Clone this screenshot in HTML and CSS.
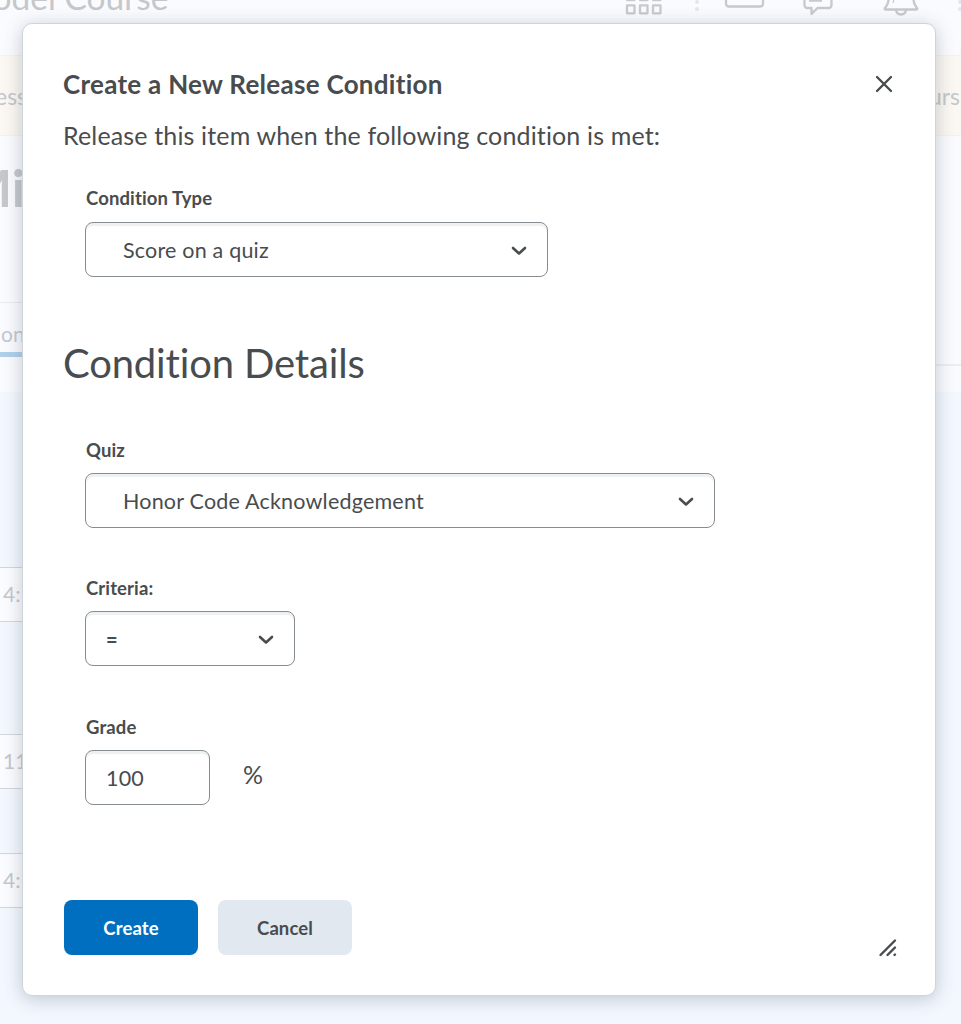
FILE: index.html
```html
<!DOCTYPE html>
<html lang="en">
  <head>
    <meta charset="UTF-8" />
    <meta name="viewport" content="width=device-width, initial-scale=1.0" />
    <title>Create a New Release Condition</title>
    <link rel="stylesheet" href="styles.css">
  </head>

  <body>
    <div class="page">
      <div class="navbar">
        <div class="course-name">Model Course</div>
        <svg class="nav-icons" width="361" height="24" viewBox="0 0 361 24" fill="none" stroke="#c8c9cd" stroke-width="2.300">
          <path d="M27 -8h7.500v8h-7.500zM40 -8h7.500v8h-7.500zM53 -8h7.500v8h-7.500zM27 5.300h7.500v8h-7.500zM40 5.300h7.500v8h-7.500zM53 5.300h7.500v8h-7.500z" stroke-linejoin="round" />
          <path d="M126 -4v7.500q0 3 3 3h31q3 0 3 -3v-7.500" />
          <path d="M204.500 -4v9q0 3 3 3h4v6l6 -6h11q3 0 3 -3v-9M209 .5h13" stroke-linejoin="round" />
          <path d="M289 -6q0 10 -4 14q-1 1.500 1 1.500h30q2 0 1 -1.500q-4 -4 -4 -14M296 10c1 6 9 6 10 0" />
          <path d="M294 -1l-1 4" stroke-width="1.200" />
          <g fill="#e4e6ee" stroke="none">
            <circle cx="97" cy="2" r="2" /><circle cx="97" cy="9" r="2" />
            <circle cx="360" cy="2" r="2" /><circle cx="360" cy="9" r="2" />
          </g>
        </svg>
      </div>
      <div class="alert">
        <span class="alert-start">ess</span>
        <span>urs</span>
      </div>
      <div class="page-title"><span>Mi</span></div>
      <div class="tabs"><div class="tab">on</div></div>
      <div class="tab-end"></div>
      <div class="content">
        <div class="row">4:</div>
        <div class="row row-second">11</div>
        <div class="row row-third">4:</div>
      </div>
    </div>

    <div class="dialog" role="dialog">
      <div class="dialog-header">
        <h1 class="dialog-title">Create a New Release Condition</h1>
        <svg class="close" width="18" height="18" viewBox="0 0 18 18">
          <path d="M2 2l14 14M16 2L2 16" />
        </svg>
      </div>
      <p class="intro">Release this item when the following condition is met:</p>

      <div class="field">
        <div class="label label-type">Condition Type</div>
        <div class="select select-type">
          <span>Score on a quiz</span>
          <svg class="chevron" width="16" height="10" viewBox="0 0 16 10"><path d="M2 2l6 5.500l6 -5.500" /></svg>
        </div>
      </div>

      <h2 class="details-title">Condition Details</h2>

      <div class="field field-quiz">
        <div class="label">Quiz</div>
        <div class="select select-quiz">
          <span>Honor Code Acknowledgement</span>
          <svg class="chevron" width="16" height="10" viewBox="0 0 16 10"><path d="M2 2l6 5.500l6 -5.500" /></svg>
        </div>
      </div>

      <div class="field field-criteria">
        <div class="label">Criteria:</div>
        <div class="select select-criteria">
          <span class="equals">=</span>
          <svg class="chevron" width="16" height="10" viewBox="0 0 16 10"><path d="M2 2l6 5.500l6 -5.500" /></svg>
        </div>
      </div>

      <div class="field field-grade">
        <div class="label">Grade</div>
        <div class="grade">
          <div class="select input-grade"><span>100</span></div>
          <span class="percent">%</span>
        </div>
      </div>

      <div class="dialog-footer">
        <button class="btn btn-primary">Create</button>
        <button class="btn">Cancel</button>
        <svg class="resize" width="20" height="20" viewBox="0 0 20 20">
          <path d="M2.500 17L17 2.500M9.500 17l7.500 -7.500M16.500 17l.5 -.5" />
        </svg>
      </div>
    </div>
  </body>
</html>
```

FILE: styles.css
```css
* {
  box-sizing: border-box;
}

body {
  margin: 0;
  height: 1024px;
  overflow: hidden;
  font-family: Lato, sans-serif;
  color: #494c4e;
}

/* page behind the dialog */
.page {
  height: 1024px;
  overflow: hidden;
  background: #fafbff;
  color: #c5c7cb;
}

.navbar {
  display: flex;
  justify-content: space-between;
  height: 55px;
}

.course-name {
  margin: -23px 0 0 -38px;
  height: 40px;
  font-size: 33.500px;
  line-height: 40px;
  white-space: nowrap;
}

.nav-icons {
  display: block;
}

.alert {
  display: flex;
  justify-content: space-between;
  align-items: center;
  height: 81px;
  padding: 1px 1px 0 0;
  border-top: 1px solid #f3f2f3;
  border-bottom: 1px solid #f3f2f3;
  background: #fbf8f3;
  font-size: 23px;
}

.alert-start {
  margin-left: -5px;
}

.page-title {
  width: 400px;
  height: 167px;
  padding-top: 20px;
  border-bottom: 1px solid #e9ebef;
  font-size: 52px;
  font-weight: bold;
  line-height: 62px;
}

.page-title span {
  margin-left: -37px;
}

.tabs {
  height: 61px;
}

.tab {
  width: 60px;
  height: 54px;
  padding: 18px 0 0 1px;
  border-bottom: 5px solid #afd0ea;
  font-size: 21px;
  line-height: 26px;
}

.tab-end {
  height: 28px;
  margin-left: 400px;
  border-top: 2px solid #eceef2;
}

.content {
  height: 632px;
  padding-top: 175px;
  background: #f3f8ff;
}

.row {
  width: 400px;
  height: 55px;
  padding-left: 3px;
  border-top: 1px solid #d3d7db;
  border-bottom: 1px solid #d3d7db;
  background: #fbfcff;
  font-size: 21px;
  line-height: 52px;
}

.row-second {
  margin-top: 112px;
}

.row-third {
  margin-top: 64px;
}

/* dialog */
.dialog {
  position: absolute;
  left: 22px;
  top: 23px;
  width: 914px;
  height: 973px;
  padding: 40px 39px 0 40px;
  border: 1px solid #cdd5dc;
  border-radius: 10px;
  background: #fff;
  box-shadow: 0 3px 18px rgba(73, 84, 92, 0.3);
}

.dialog-header {
  display: flex;
  justify-content: space-between;
  align-items: center;
  height: 40px;
}

.dialog-title {
  margin: 0;
  font-size: 26px;
  font-weight: bold;
  line-height: 40px;
  letter-spacing: 0.28px;
}

.close {
  margin: -1px 3px 0 0;
  fill: none;
  stroke: #494c4e;
  stroke-width: 2.4;
  stroke-linecap: round;
}

.intro {
  margin: 11px 0 0;
  font-size: 25px;
  line-height: 40px;
  letter-spacing: 0.15px;
}

.field {
  margin: 31px 0 0 22px;
}

.label {
  height: 36px;
  padding-left: 1px;
  font-size: 18.500px;
  font-weight: bold;
  line-height: 26px;
  letter-spacing: 0.12px;
}

.label-type {
  line-height: 24px;
}

.select {
  display: flex;
  justify-content: space-between;
  align-items: center;
  height: 55px;
  padding: 0 20px;
  border: 1px solid #868c8f;
  border-radius: 8px;
  box-shadow: inset 0 3px 1px #eef1f4;
  font-size: 21.500px;
  letter-spacing: 0.2px;
}

.select-type {
  width: 463px;
  padding-left: 37px;
}

.select-quiz {
  width: 630px;
  padding-left: 37px;
}

.select-criteria {
  width: 210px;
}

.chevron {
  margin-top: 2px;
  fill: none;
  stroke: #494c4e;
  stroke-width: 2.600;
  stroke-linecap: round;
  stroke-linejoin: round;
}

.equals {
  font-size: 20px;
  font-weight: bold;
}

.details-title {
  margin: 61px 0 0;
  font-size: 40px;
  font-weight: normal;
  line-height: 50px;
  letter-spacing: -0.15px;
}

.field-quiz {
  margin-top: 49px;
}

.field-criteria {
  margin-top: 47px;
}

.field-grade {
  margin-top: 48px;
}

.grade {
  display: flex;
  align-items: center;
}

.input-grade {
  width: 125px;
}

.percent {
  margin: -7px 0 0 33px;
  font-size: 25px;
}

.dialog-footer {
  display: flex;
  margin: 95px 0 0 1px;
}

.btn {
  width: 134px;
  height: 55px;
  margin: 0 20px 0 0;
  padding: 0;
  border: none;
  border-radius: 8px;
  background: #e2e8f0;
  color: #494c4e;
  font-family: Lato, sans-serif;
  font-size: 18.500px;
  font-weight: bold;
  letter-spacing: 0.1px;
}

.btn-primary {
  background: #006fbf;
  color: #fff;
}

.resize {
  margin: 38px -2px 0 auto;
  fill: none;
  stroke: #494c4e;
  stroke-width: 2.400;
  stroke-linecap: round;
}
```
